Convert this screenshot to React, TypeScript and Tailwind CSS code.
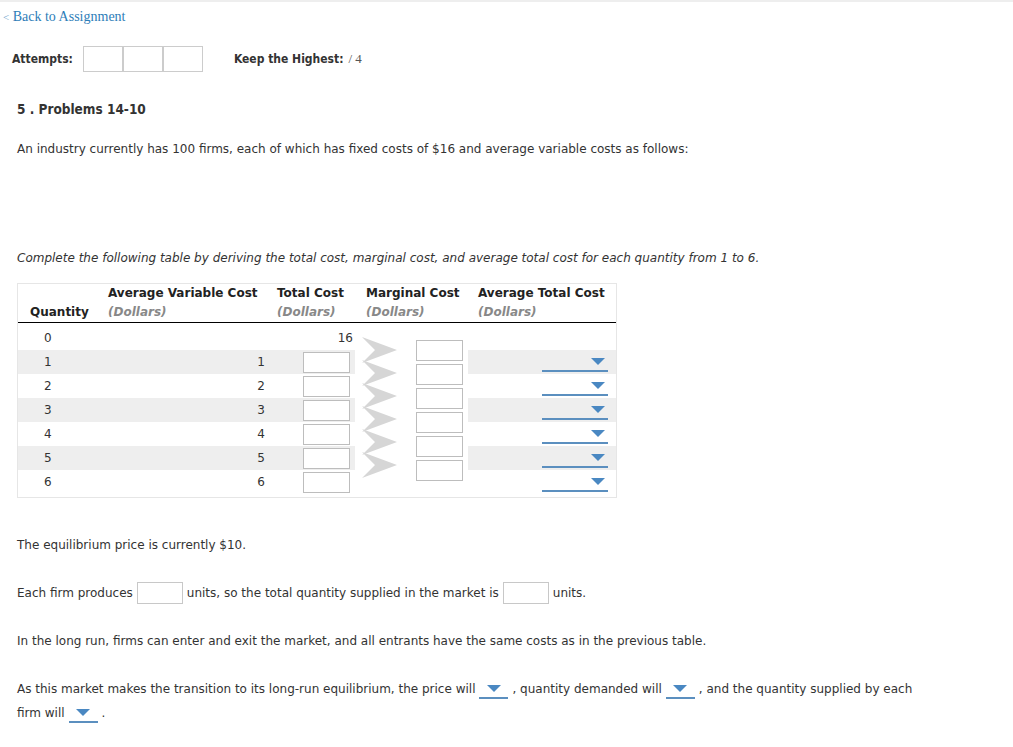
import React from "react";

const rows = [0, 1, 2, 3, 4, 5, 6];

function Caret({ className }: { className?: string }) {
  return (
    <svg width="14" height="8" viewBox="0 0 14 8" className={className}>
      <polygon points="0,0 14,0 7,7" fill="#4a88c2" />
    </svg>
  );
}

function TableSelect() {
  return (
    <div className="ml-[74px] flex h-[21px] w-[66px] items-end justify-end border-b-2 border-[#5b8fbf] pr-[3px] pb-[4px]">
      <Caret />
    </div>
  );
}

function InlineSelect() {
  return (
    <span className="mx-[4px] inline-flex h-[18px] w-[29px] items-center justify-center border-b-2 border-[#5b8fbf] align-middle">
      <Caret />
    </span>
  );
}

function Arrow() {
  return (
    <div className="h-[24px] pl-[7px]">
      <svg width="36" height="26" viewBox="0 0 36 26" className="-mt-[1px] overflow-visible">
        <polygon points="0,0 35,13 0,26 13,13" fill="#d6d6d6" />
      </svg>
    </div>
  );
}

function Box({ className }: { className?: string }) {
  return <div className={`border border-[#bdbdbd] bg-white ${className ?? ""}`} />;
}

function CostTable() {
  return (
    <div className="ml-[17px] w-[600px] border border-[#e6e6e6] pb-[3px]">
      <div className="flex border-b border-black leading-[19px] font-bold text-[#222]">
        <div className="flex w-[82px] flex-col justify-end pl-[12px]">Quantity</div>
        <div className="w-[170px] pl-[8px]">
          <div>Average Variable Cost</div>
          <div className="italic text-[#888]">(Dollars)</div>
        </div>
        <div className="w-[85px] pl-[7px]">
          <div>Total Cost</div>
          <div className="italic text-[#888]">(Dollars)</div>
        </div>
        <div className="w-[113px] pl-[11px]">
          <div>Marginal Cost</div>
          <div className="italic text-[#888]">(Dollars)</div>
        </div>
        <div className="w-[148px] pl-[10px]">
          <div>Average Total Cost</div>
          <div className="italic text-[#888]">(Dollars)</div>
        </div>
      </div>

      <div className="mt-[3px] flex">
        <div className="w-[337px]">
          {rows.map((q) => (
            <div key={q} className={`flex h-[24px] items-center ${q % 2 === 1 ? "bg-[#eeeeee]" : ""}`}>
              <div className="w-[82px] pl-[26px]">{q}</div>
              <div className="w-[170px] pr-[5px] text-right">{q === 0 ? "" : q}</div>
              <div className="flex w-[85px] justify-end">
                {q === 0 ? <span className="pr-[2px]">16</span> : <Box className="mr-[5px] h-[21px] w-[47px]" />}
              </div>
            </div>
          ))}
        </div>
        <div className="flex w-[113px]">
          <div className="w-[55px] pt-[12px]">
            {rows.slice(1).map((q) => (
              <Arrow key={q} />
            ))}
          </div>
          <div className="w-[58px] pt-[12px]">
            {rows.slice(1).map((q) => (
              <div key={q} className="flex h-[24px] items-center pl-[6px]">
                <Box className="h-[21px] w-[47px]" />
              </div>
            ))}
          </div>
        </div>
        <div className="w-[148px]">
          {rows.map((q) => (
            <div key={q} className={`flex h-[24px] items-start pt-[1px] ${q % 2 === 1 ? "bg-[#eeeeee]" : ""}`}>
              {q > 0 && <TableSelect />}
            </div>
          ))}
        </div>
      </div>
    </div>
  );
}

export default function App() {
  return (
    <div className="min-h-[747px] w-[1013px] border-t-2 border-[#eeeeee] bg-white font-['DejaVu_Sans',sans-serif] text-[12px] text-[#333]">
      <div className="mt-[6px] pl-[3px] font-['Liberation_Serif',serif] text-[14px] leading-[18px] text-[#2d7db8]">
        <span className="text-[11px] text-[#6fa3cc]">&lt;</span> Back to Assignment
      </div>

      <div className="mt-[20px] flex items-center pl-[12px] font-['DejaVu_Sans_Condensed','DejaVu_Sans',sans-serif] font-bold text-[#333]">
        <span>Attempts:</span>
        <div className="ml-[10px] flex">
          <Box className="h-[26px] w-[40px] border-[#cccccc]" />
          <Box className="h-[26px] w-[40px] border-[#cccccc]" />
          <Box className="h-[26px] w-[40px] border-[#cccccc]" />
        </div>
        <span className="ml-[31px]">Keep the Highest:</span>
        <span className="ml-[5px] font-['Liberation_Serif',serif] text-[13px] font-normal text-[#555]">/ 4</span>
      </div>

      <div className="mt-[28px] pl-[17px] font-['DejaVu_Sans_Condensed','DejaVu_Sans',sans-serif] text-[13.5px] leading-[18px] font-bold text-[#333]">
        5 . Problems 14-10
      </div>

      <p className="mt-[22px] pl-[17px] leading-[18px]">
        An industry currently has 100 firms, each of which has fixed costs of $16 and average variable costs as follows:
      </p>

      <p className="mt-[91px] mb-[16px] pl-[17px] leading-[18px] italic">
        Complete the following table by deriving the total cost, marginal cost, and average total cost for each quantity from 1 to 6.
      </p>

      <CostTable />

      <p className="mt-[38px] pl-[17px] leading-[18px]">The equilibrium price is currently $10.</p>

      <div className="mt-[27px] flex h-[24px] items-center pl-[17px]">
        <span>Each firm produces</span>
        <Box className="mx-[4px] h-[22px] w-[46px] border-[#c8c8c8]" />
        <span>units, so the total quantity supplied in the market is</span>
        <Box className="mx-[4px] h-[22px] w-[46px] border-[#c8c8c8]" />
        <span>units.</span>
      </div>

      <p className="mt-[27px] pl-[17px] leading-[18px]">
        In the long run, firms can enter and exit the market, and all entrants have the same costs as in the previous table.
      </p>

      <p className="mt-[27px] pl-[17px] leading-[24px]">
        As this market makes the transition to its long-run equilibrium, the price will
        <InlineSelect />, quantity demanded will
        <InlineSelect />, and the quantity supplied by each
        <br />
        firm will
        <InlineSelect />.
      </p>
    </div>
  );
}
